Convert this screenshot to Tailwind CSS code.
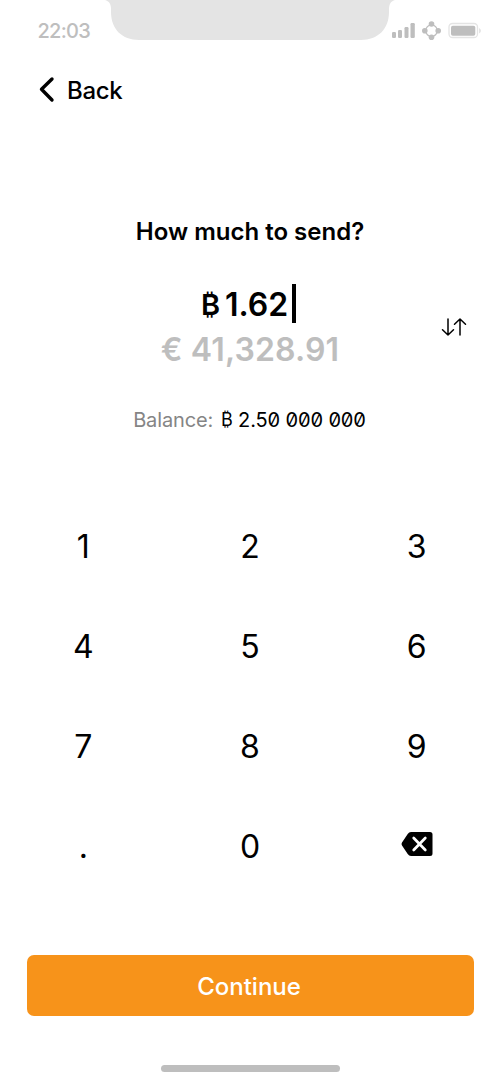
<!DOCTYPE html>
<html lang="en">
<head>
<meta charset="utf-8">
<title>Send</title>
<script src="https://cdn.jsdelivr.net/npm/@tailwindcss/browser@4"></script>
</head>
<body class="bg-white">
<main class="w-[500px] h-[1083px] flex flex-col overflow-hidden bg-white text-black font-['Inter',sans-serif]">
  <header class="h-[60px] flex shrink-0 justify-between">
    <time class="w-[105px] pl-[37.500px] pt-[16px] text-[20px] leading-[30px] tracking-[-0.7px] font-medium text-[#bebebe]">22:03</time>
    <svg class="shrink-0" width="290" height="40" viewBox="105 0 290 40" fill="#e4e4e4"><path d="M105 0C109 1 111 4 111 9V12C111 29 122 40 139 40H361C378 40 389 29 389 12V9C389 4 391 1 395 0Z"/></svg>
    <svg class="shrink-0" width="105" height="60" viewBox="395 0 105 60" overflow="visible" fill="#bebebe">
      <rect x="392" y="32" width="4" height="6" rx="1.2"/><rect x="398" y="30" width="4" height="8" rx="1.2"/><rect x="404.500" y="27" width="4" height="11" rx="1.2"/><rect x="410.500" y="23" width="4.300" height="15" rx="1.200"/>
      <circle cx="431.500" cy="30.700" r="5.800" fill="none" stroke="#bebebe" stroke-width="1.300"/>
      <circle cx="431.500" cy="24" r="2.800"/><circle cx="431.500" cy="37.300" r="2.800"/><circle cx="424.800" cy="30.700" r="2.800"/><circle cx="438.200" cy="30.700" r="2.800"/>
      <rect x="449" y="23.500" width="28.500" height="14" rx="3.500" fill="none" stroke="#e4e4e4" stroke-width="1.300"/>
      <rect x="451" y="25.700" width="24.300" height="10" rx="1.800"/>
      <path d="M479 28Q481 29 481 30.700T479 33.400Z" fill="#e4e4e4"/>
    </svg>
  </header>
  <nav class="h-[60px] shrink-0 flex items-center pl-[38px]">
    <svg width="18" height="28" viewBox="0 0 18 28" fill="none" stroke="#000" stroke-width="3.400" stroke-linecap="round" stroke-linejoin="round"><path d="M14 3L3.500 13.300L14 24"/></svg>
    <span class="ml-[11px] pt-[2px] text-[24px] leading-[30px] tracking-[-0.3px] font-medium">Back</span>
  </nav>
  <h1 class="mt-[96px] h-[32px] shrink-0 text-center text-[24px] leading-[32px] font-semibold">How much to send?</h1>
  <section class="mt-[34px] h-[90px] shrink-0 grid grid-cols-[92px_316px_92px] items-center">
    <span></span>
    <div class="text-center text-[32px] font-semibold whitespace-nowrap">
      <div class="h-[45px] flex items-center justify-center pr-[3px]"><span class="w-[21px] text-left text-[29px]">₿</span><span class="ml-[3px]">1.62</span><span class="ml-[4px] mb-[3px] w-[4px] h-[39px] bg-black"></span></div>
      <div class="h-[45px] leading-[45px] tracking-[0.15px] text-[#bebebe]">€ 41,328.91</div>
    </div>
    <svg class="ml-[32px]" width="28" height="24" viewBox="440 315 28 24" fill="none" stroke="#000" stroke-width="1.500" stroke-linecap="round" stroke-linejoin="round"><path d="M448 319V335M442.500 329.700L448 335L453.500 329.700M460 335V319M454.500 324.300L460 319L465.500 324.300"/></svg>
  </section>
  <p class="mt-[33px] h-[30px] shrink-0 flex justify-center items-center pr-px text-[20px] leading-[30px] tracking-[-0.14px] whitespace-nowrap"><span class="text-[#858585]">Balance:</span><span class="ml-[8px] w-[13px] text-left text-[18px]">₿</span><span class="ml-[4px] slashed-zero">2.50 000 000</span></p>
  <section class="mt-[62px] h-[400px] shrink-0 grid grid-cols-3 grid-rows-4 place-items-center text-[32px] leading-[40px]">
    <span>1</span><span>2</span><span>3</span>
    <span>4</span><span>5</span><span>6</span>
    <span>7</span><span>8</span><span>9</span>
    <span>.</span><span>0</span>
    <svg class="mb-[6px]" width="32" height="26" viewBox="401 831 32 26"><path d="M411 832H430Q432.500 832 432.500 834.500V853.500Q432.500 856 430 856H411Q409 856 407.700 854L402 845.500Q401 844 402 842.500L407.700 834Q409 832 411 832Z"/><path d="M413.700 838L425.300 850M425.300 838L413.700 850" fill="none" stroke="#fff" stroke-width="2.700" stroke-linecap="round"/></svg>
  </section>
  <button class="mt-[57.500px] mx-auto w-[447px] h-[61.500px] pt-[3px] shrink-0 rounded-[7px] bg-[#f7931a] text-white text-[24px] leading-[30px] font-medium pr-[2px]">Continue</button>
  <div class="mt-[49px] mx-auto w-[179px] h-[7px] shrink-0 rounded-full bg-[#bebebe]"></div>
</main>
</body>
</html>
